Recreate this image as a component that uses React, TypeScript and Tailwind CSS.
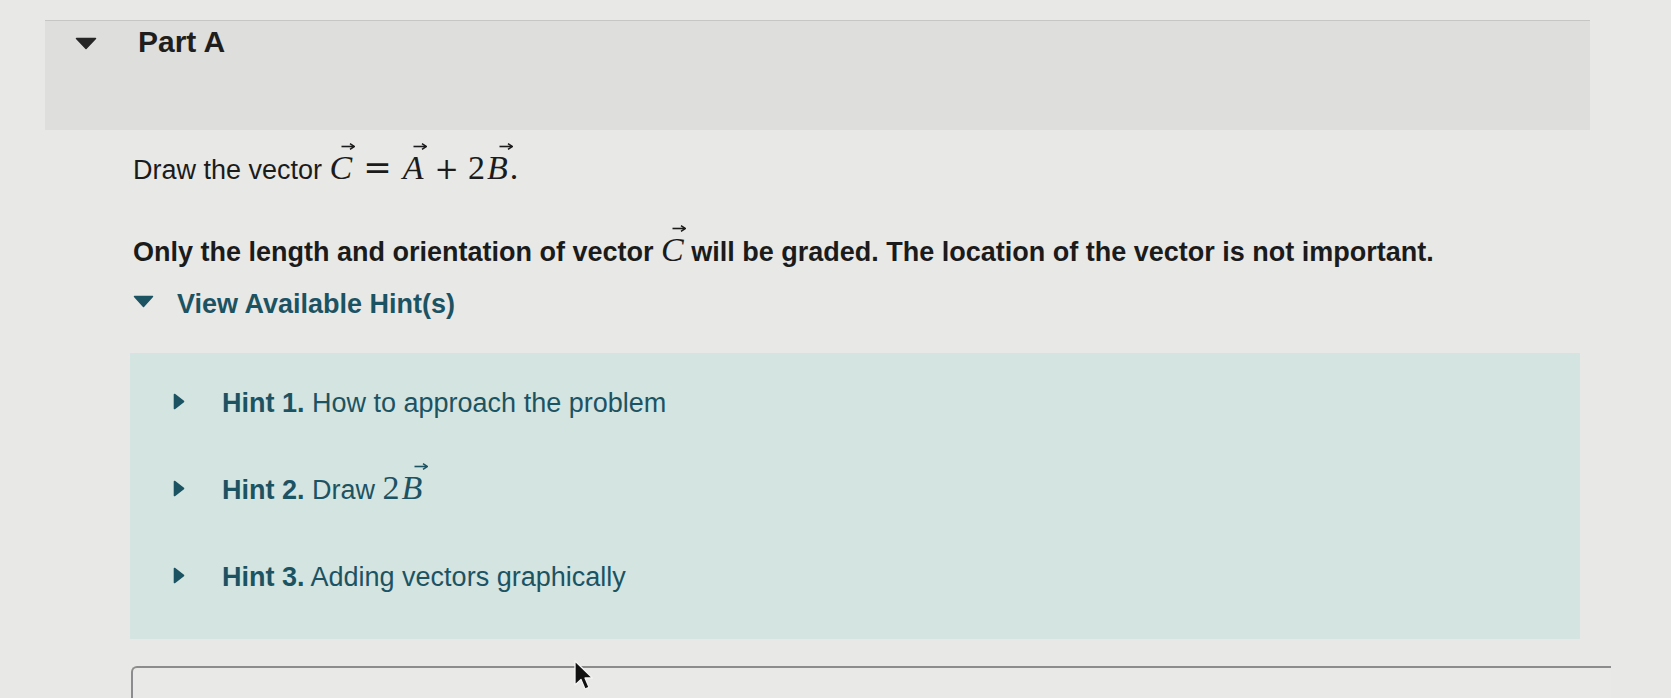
import React from "react";

const VecArrow = ({ left = 11 }: { left?: number }) => (
  <svg
    className="absolute top-[-6px]"
    style={{ left }}
    width="14"
    height="7"
    viewBox="0 0 14 7"
    aria-hidden
  >
    <path d="M0.5 3.5 H12.5" stroke="currentColor" strokeWidth="1.6" />
    <path d="M9 0.7 L13.3 3.5 L9 6.3" fill="none" stroke="currentColor" strokeWidth="1.5" />
  </svg>
);

const Vec = ({ l, left }: { l: string; left?: number }) => (
  <span className="relative italic">
    {l}
    <VecArrow left={left} />
  </span>
);

const Math = ({ children }: { children: React.ReactNode }) => (
  <span className="font-['Liberation_Serif',serif] text-[34px] font-normal leading-[28px]">{children}</span>
);

const RightTri = () => (
  <svg width="12" height="17" viewBox="0 0 12 17" className="shrink-0" aria-hidden>
    <path d="M1.5 1.5 L10.5 8.5 L1.5 15.5 Z" fill="#1c5363" stroke="#1c5363" strokeWidth="1.6" strokeLinejoin="round" />
  </svg>
);

const DownTri = ({ color, w, h }: { color: string; w: number; h: number }) => (
  <svg width={w} height={h} viewBox={`0 0 ${w} ${h}`} className="shrink-0" aria-hidden>
    <path d={`M1.5 1.5 L${w - 1.5} 1.5 L${w / 2} ${h - 1.5} Z`} fill={color} stroke={color} strokeWidth="1.5" strokeLinejoin="round" />
  </svg>
);

export default function App() {
  return (
    <div className="relative h-[698px] w-full overflow-hidden bg-[#e8e8e6] font-['Liberation_Sans',Arial,sans-serif] text-[#1b1b1b]">
      <div className="pt-[20px]">
        <header className="ml-[45px] flex h-[110px] w-[1545px] items-start border-t border-[#c6c6c4] bg-[#dededc] pt-[3px]">
          <div className="ml-[30px] mt-[6px] flex h-[26px] items-center">
            <DownTri color="#262626" w={22} h={13} />
          </div>
          <div className="ml-[41px] text-[30px] font-bold leading-[36px] text-[#1e1e1e]">Part A</div>
        </header>
      </div>

      <main className="ml-[133px] w-[1460px]">
        <p className="mt-[23px] text-[27px] leading-[32px]">
          Draw the vector{" "}
          <Math>
            <Vec l="C" />
            <span className="ml-[11px] mr-[11px] inline-block font-['DejaVu_Serif',serif] text-[34px] not-italic">=</span>
            <Vec l="A" left={10} />
            <span className="ml-[11px] mr-[9px] inline-block font-['DejaVu_Serif',serif] text-[29px]">+</span>
            <span className="mr-[2px]">2</span>
            <Vec l="B" left={12} />
            <span className="ml-[2px]">.</span>
          </Math>
        </p>

        <p className="mt-[50px] text-[27px] font-bold leading-[32px]">
          Only the length and orientation of vector{" "}
          <Math>
            <Vec l="C" />
          </Math>{" "}
          will be graded. The location of the vector is not important.
        </p>

        <div className="mt-[20px] flex h-[32px] items-center text-[#1c5363]">
          <div className="mt-[-6px]">
            <DownTri color="#1c5363" w={21} h={13} />
          </div>
          <span className="ml-[23px] text-[27px] font-bold leading-[32px]">View Available Hint(s)</span>
        </div>
      </main>

      <section className="ml-[130px] mt-[33px] flex w-[1450px] flex-col gap-[55px] bg-[#d4e4e0] pb-[46px] pl-[43px] pt-[34px] text-[#1c5363]">
        <div className="flex h-[32px] items-center">
          <div className="mt-[-3px]">
            <RightTri />
          </div>
          <span className="ml-[37px] text-[27px] leading-[32px]">
            <b>Hint 1.</b> How to approach the problem
          </span>
        </div>
        <div className="flex h-[32px] items-center">
          <div className="mt-[-3px]">
            <RightTri />
          </div>
          <span className="ml-[37px] text-[27px] leading-[32px]">
            <b>Hint 2.</b> Draw{" "}
            <Math>
              <span className="mr-[2px]">2</span>
              <Vec l="B" left={12} />
            </Math>
          </span>
        </div>
        <div className="flex h-[32px] items-center">
          <div className="mt-[-3px]">
            <RightTri />
          </div>
          <span className="ml-[37px] text-[27px] leading-[32px]">
            <b>Hint 3.</b> Adding vectors graphically
          </span>
        </div>
      </section>

      <div className="ml-[131px] mt-[27px] h-[80px] w-[1480px] rounded-tl-[6px] border-l-2 border-t-2 border-[#8c8c8c] bg-[#e9e9e7]" />

      <svg className="absolute left-[574px] top-[660px]" width="20" height="32" viewBox="0 0 20 32" aria-hidden>
        <path d="M1 1 L1 25 L7 19.5 L11 29 L15 27.3 L11 18 L18.5 18 Z" fill="#111" stroke="#f4f4f4" strokeWidth="1.3" strokeLinejoin="round" />
      </svg>
    </div>
  );
}
